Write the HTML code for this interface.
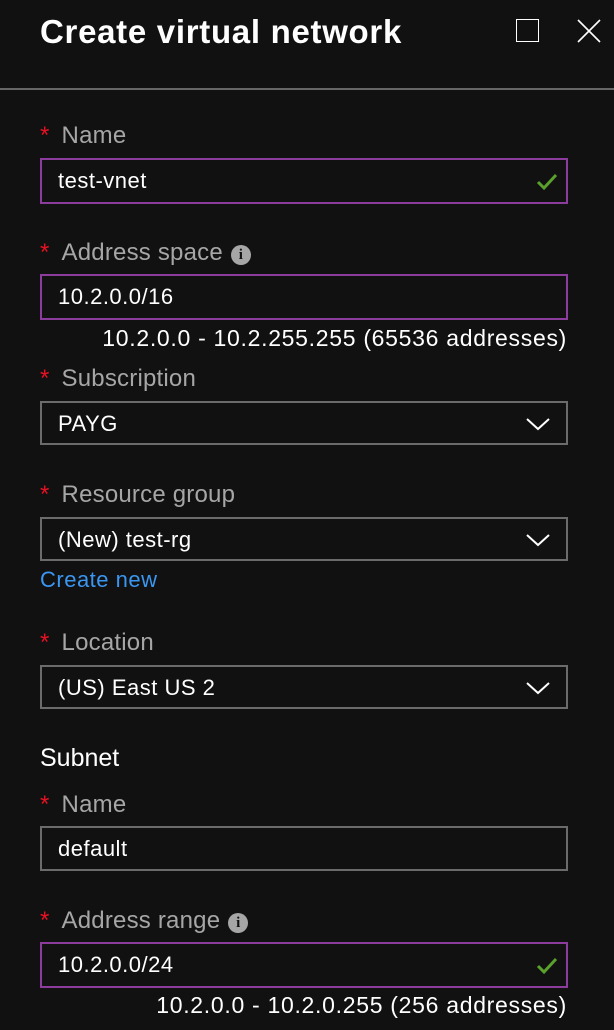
<!DOCTYPE html>
<html><head><style>
body{margin:0;width:614px;height:1030px;background:#111111;font-family:"Liberation Sans",sans-serif;position:relative;overflow:hidden;color:#fff}
.a{position:absolute;white-space:nowrap}
.t{left:40px;top:13px;font-size:33px;font-weight:bold;color:#fff;letter-spacing:0.7px}
.lbl{left:40px;font-size:24px;color:#a6a6a6;line-height:26px;letter-spacing:0.2px}
.lbl b{color:#e81123;font-weight:normal;margin-right:12px}
.box{position:absolute;left:40px;width:524px;height:42px;border:2px solid #6b6b6b;box-sizing:content-box}
.box.p{border-color:#8b3c9c}
.box span{position:absolute;left:16px;top:8px;font-size:22px;color:#fff;letter-spacing:0.5px}
.help{right:47px;font-size:23px;color:#fff;letter-spacing:0.7px}
.info{display:inline-block;width:20px;height:20px;border-radius:50%;background:#a6a6a6;color:#111;font-size:15px;font-weight:bold;text-align:center;line-height:20px;vertical-align:1px;margin-left:8px;font-family:"Liberation Serif",serif}
</style></head><body>
<div class="a t">Create virtual network</div>
<div class="a" style="left:516px;top:19px;width:21px;height:21px;border:1.5px solid #fff"></div>
<svg class="a" style="left:576px;top:18px" width="26" height="26"><path d="M2 2L24 24M24 2L2 24" stroke="#fff" stroke-width="1.6"/></svg>
<div class="a" style="left:0;top:88px;width:614px;height:2px;background:#666"></div>

<div class="a lbl" style="top:123px"><b>*</b>Name</div>
<div class="box p" style="top:158px;height:42px"><span>test-vnet</span>
<svg class="a" style="right:8px;top:12px" width="22" height="20"><path d="M2 10L8 16L20 3" stroke="#5aa02c" stroke-width="3" fill="none"/></svg></div>

<div class="a lbl" style="top:240px"><b>*</b>Address space<span class="info">i</span></div>
<div class="box p" style="top:274px"><span>10.2.0.0/16</span></div>
<div class="a help" style="top:325px">10.2.0.0 - 10.2.255.255 (65536 addresses)</div>

<div class="a lbl" style="top:366px"><b>*</b>Subscription</div>
<div class="box" style="top:401px;height:40px"><span>PAYG</span>
<svg class="a" style="right:16px;top:14px" width="24" height="14"><path d="M1 2L12 12L23 2" stroke="#fff" stroke-width="2" fill="none"/></svg></div>

<div class="a lbl" style="top:482px"><b>*</b>Resource group</div>
<div class="box" style="top:517px;height:40px"><span>(New) test-rg</span>
<svg class="a" style="right:16px;top:14px" width="24" height="14"><path d="M1 2L12 12L23 2" stroke="#fff" stroke-width="2" fill="none"/></svg></div>
<div class="a" style="left:40px;top:567px;font-size:22px;color:#3a96f0;letter-spacing:0.5px">Create new</div>

<div class="a lbl" style="top:630px"><b>*</b>Location</div>
<div class="box" style="top:665px;height:40px"><span>(US) East US 2</span>
<svg class="a" style="right:16px;top:14px" width="24" height="14"><path d="M1 2L12 12L23 2" stroke="#fff" stroke-width="2" fill="none"/></svg></div>

<div class="a" style="left:40px;top:744px;font-size:25px;color:#fff">Subnet</div>
<div class="a lbl" style="top:792px"><b>*</b>Name</div>
<div class="box" style="top:826px;height:41px"><span>default</span></div>

<div class="a lbl" style="top:908px"><b>*</b>Address range<span class="info">i</span></div>
<div class="box p" style="top:942px"><span>10.2.0.0/24</span>
<svg class="a" style="right:8px;top:12px" width="22" height="20"><path d="M2 10L8 16L20 3" stroke="#5aa02c" stroke-width="3" fill="none"/></svg></div>
<div class="a help" style="top:992px">10.2.0.0 - 10.2.0.255 (256 addresses)</div>
</body></html>
